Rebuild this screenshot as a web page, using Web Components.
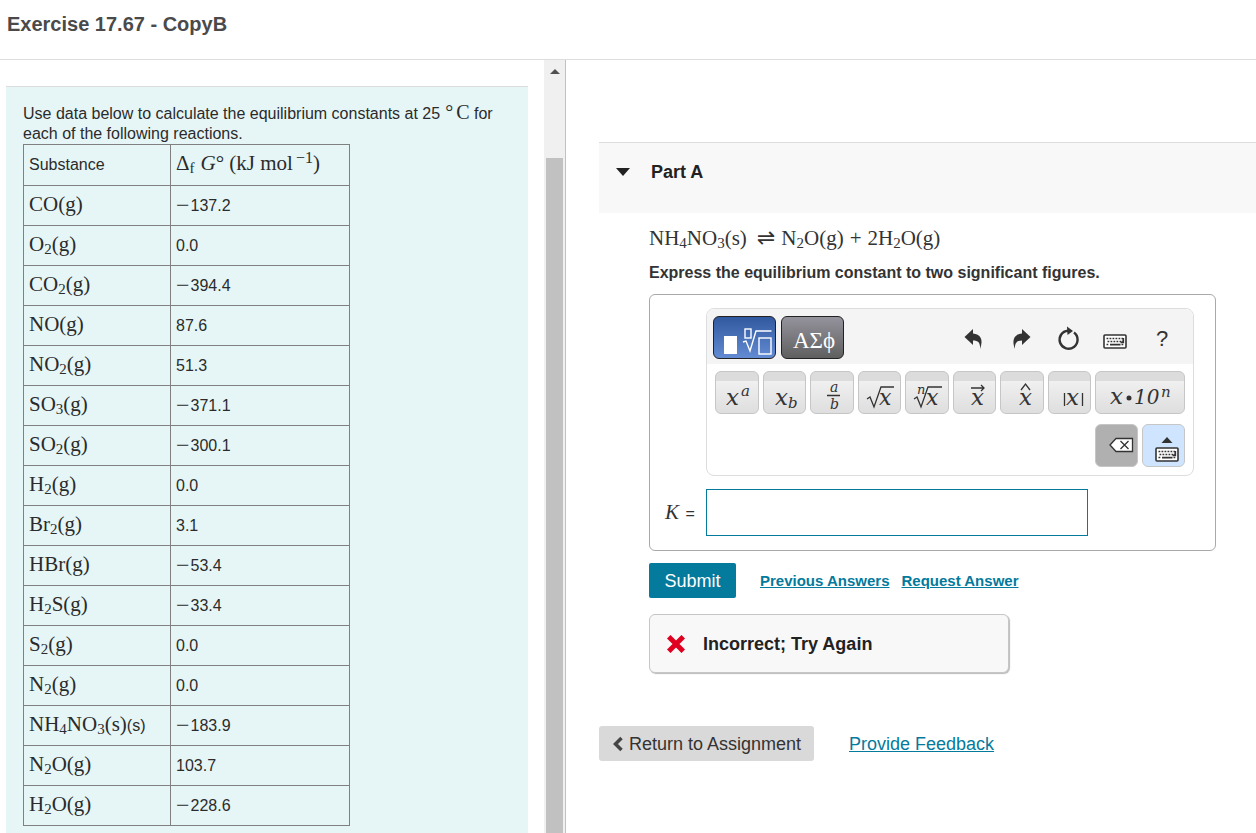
<!DOCTYPE html>
<html lang="en">
<head>
<meta charset="utf-8">
<meta name="viewport" content="width=device-width, initial-scale=1">
<title>Exercise 17.67 - CopyB</title>
<style>
  body { margin: 0; background: #fff; color: #2b2b2b; font: 16px/20px "Liberation Sans", Arial, sans-serif; }
</style>
</head>
<body>
<exercise-page>
  <span slot="title">Exercise 17.67 - CopyB</span>
  <problem-card slot="problem">
    <span slot="intro">Use data below to calculate the equilibrium constants at 25<math-text>°<i-gap></i-gap>C</math-text> for each of the following reactions.</span>
  </problem-card>
  <part-section slot="work">
    <span slot="title">Part A</span>
    <reaction-line slot="reaction"></reaction-line>
    <span slot="hint">Express the equilibrium constant to two significant figures.</span>
    <answer-box slot="answer"></answer-box>
    <submit-bar slot="answer"></submit-bar>
    <result-note slot="answer">Incorrect; Try Again</result-note>
  </part-section>
  <page-footer slot="footer"></page-footer>
</exercise-page>

<script>
const define = (name, html, setup) => {
  const template = document.createElement('template');
  template.innerHTML = html;
  customElements.define(name, class extends HTMLElement {
    constructor() {
      super();
      this.attachShadow({ mode: 'open' }).append(template.content.cloneNode(true));
      if (setup) setup(this.shadowRoot);
    }
  });
};

const keyboard = (x, y) => `
  <g transform="translate(${x} ${y})">
    <rect x="1" y="1" width="22" height="13" rx="1" fill="#fff" stroke="#333" stroke-width="1.6"/>
    <path d="M3.5 4.5H20M4.5 7.5H20M3.5 10.5H6M18.5 10.5H21" stroke="#333" stroke-width="1.7" stroke-dasharray="1.8 1.2" fill="none"/>
    <path d="M7 10.7H17.5M20.3 4V8.4H17.6" stroke="#333" stroke-width="1.7" fill="none"/>
  </g>`;

define('i-gap', `<style>:host{display:inline-block;width:3px}</style>`);

/* Serif run used for formulas */
define('math-text', `
<style>
  :host { font-family: "Liberation Serif", "Times New Roman", serif; font-size: var(--math-size, 21px); line-height: 1px; }
</style><slot></slot>`);

define('exercise-page', `
<style>
  :host { display: flex; flex-direction: column; height: 100vh; overflow: hidden; }
  header { flex: none; padding: 12px 7px 23px; border-bottom: 1px solid #ddd; }
  h1 { margin: 0; font-size: 20px; line-height: 24px; font-weight: bold; color: #4a4a4a; }
  main { flex: 1; min-height: 0; display: grid; grid-template-columns: 566fr 690fr; }
  .left { display: flex; min-width: 0; min-height: 0; overflow: hidden; border-right: 1px solid #b9c3cb; }
  .problem { flex: 1; min-width: 0; padding: 26px 16px 0 6px; display: grid; }
  .work { min-width: 0; padding: 82px 0 0 33px; }
</style>
<header><h1><slot name="title"></slot></h1></header>
<main>
  <div class="left">
    <div class="problem"><slot name="problem"></slot></div>
    <scroll-rail></scroll-rail>
  </div>
  <div class="work"><slot name="work"></slot><slot name="footer"></slot></div>
</main>`);

define('scroll-rail', `
<style>
  :host { flex: none; width: 21px; display: flex; flex-direction: column; align-items: center; background: #f0f0f0; }
  svg { display: block; margin: 9px 0 84px; }
  .thumb { flex: 1; width: 17px; background: #c1c1c1; }
</style>
<svg width="10" height="5" viewBox="0 0 10 5"><path d="M5 0L10 5H0z" fill="#505050"/></svg>
<div class="thumb"></div>`);

const rows = [
  ['CO(g)', '−137.2'], ['O2(g)', '0.0'], ['CO2(g)', '−394.4'], ['NO(g)', '87.6'],
  ['NO2(g)', '51.3'], ['SO3(g)', '−371.1'], ['SO2(g)', '−300.1'], ['H2(g)', '0.0'],
  ['Br2(g)', '3.1'], ['HBr(g)', '−53.4'], ['H2S(g)', '−33.4'], ['S2(g)', '0.0'],
  ['N2(g)', '0.0'], ['NH4NO3(s)', '−183.9', '(s)'], ['N2O(g)', '103.7'], ['H2O(g)', '−228.6']
];
const formula = t => t.replace(/\d/g, '<sub>$&</sub>');

define('problem-card', `
<style>
  :host { display: block; box-sizing: border-box; background: #e6f6f7; border-top: 1px solid #ddd; padding: 17px 17px 8px; }
  p { margin: 0; --math-size: 20px; }
  table { border-collapse: collapse; table-layout: fixed; width: 327px; }
  th, td { box-sizing: border-box; border: 1px solid #808080; height: 40px; padding: 0 5px; text-align: left; font-weight: normal; vertical-align: middle; }
  th { height: 41px; }
  .name { width: 147px; }
  .minus { --math-size: 24px; vertical-align: -2px; margin-right: 1px; }
  sub, sup { font-size: 15px; line-height: 1px; vertical-align: baseline; position: relative; }
  sub { top: 3px; }
  sup { font-size: 16px; top: -7px; }
</style>
<p><slot name="intro"></slot></p>
<table>
  <thead><tr><th class="name" scope="col">Substance</th>
  <th scope="col"><math-text>Δ<sub>f</sub><i-gap></i-gap><i-gap></i-gap><i>G</i>° (kJ mol<i-gap></i-gap><sup>−1</sup>)</math-text></th></tr></thead>
  <tbody></tbody>
</table>`, root => {
  root.querySelector('tbody').innerHTML = rows.map(([name, value, extra = '']) =>
    `<tr><td><math-text>${formula(name)}</math-text>${extra}</td>` +
    `<td>${value.replace('−', '<math-text class="minus">−</math-text>')}</td></tr>`).join('');
});

define('part-section', `
<style>
  :host { display: block; }
  header { display: flex; align-items: flex-start; gap: 21px; height: 70px; box-sizing: content-box; border-top: 1px solid #ddd; background: #f8f8f8; padding-left: 17px; }
  button { border: 0; background: none; padding: 0; margin: 24px 0 0; width: 14px; height: 9px; }
  svg { display: block; }
  h2 { margin: 19px 0 0; font-size: 18px; line-height: 20px; color: #222; }
  .body { padding: 14px 40px 0 50px; }
  .hint { margin: 14px 0 11px; font-size: 16px; line-height: 20px; font-weight: bold; color: #333; }
</style>
<header>
  <button aria-label="Collapse part"><svg width="14" height="9" viewBox="0 0 14 9"><path d="M0 1H14L7 9z" fill="#222"/></svg></button>
  <h2><slot name="title"></slot></h2>
</header>
<div class="body">
  <slot name="reaction"></slot>
  <p class="hint"><slot name="hint"></slot></p>
  <slot name="answer"></slot>
</div>`);

define('reaction-line', `
<style>
  :host { display: block; color: #333; font: 21px/22px "Liberation Serif", "Times New Roman", serif; white-space: nowrap; }
  sub { font-size: 15px; line-height: 1px; vertical-align: baseline; position: relative; top: 3px; }
  .arrow { font: 22px/1px "DejaVu Sans", sans-serif; margin: 0 6px 0 10px; }
  .plus { margin: 0 6px; }
</style>${formula('NH4NO3(s)')}<span class="arrow">⇌</span>${formula('N2O(g)')}<span class="plus">+</span>2${formula('H2O(g)')}`);

const key = (label, art) =>
  `<button class="key" aria-label="${label}"><svg width="42" height="42" viewBox="0 0 42 42">${art}</svg></button>`;

define('answer-box', `
<style>
  :host { display: grid; grid-template-columns: 41px minmax(0, 1fr); row-gap: 13px; align-items: center;
    border: 1px solid #a9a9a9; border-radius: 6px; padding: 13px 21px 14px 15px; }
  .panel { grid-column: 2; border: 1px solid #ddd; border-radius: 8px; overflow: hidden; background: #fff; }
  .top { display: flex; align-items: center; gap: 5px; background: #f4f4f4; padding: 7px 19px 5px 6px; }
  .tools { margin-left: auto; display: flex; gap: 23px; }
  button { padding: 0; font: inherit; }
  svg { display: block; overflow: visible; }
  .tab { box-sizing: border-box; width: 63px; height: 43px; border: 1px solid #222; border-radius: 6px; }
  .blue { background: linear-gradient(#30599f, #628bd3); }
  .gray { background: linear-gradient(#95939d, #5f5f5f); }
  .tool { width: 24px; height: 24px; border: 0; background: none; }
  .rows { padding: 7px 8px 8px; display: grid; grid-template-columns: minmax(0, 1fr); gap: 10px; max-width: 470px; }
  .row { display: flex; gap: 4px; }
  .row.end { justify-content: flex-end; }
  .key { flex: 1; min-width: 0; box-sizing: border-box; height: 43px; border: 1px solid #c6c6c6; border-radius: 6px;
    background: linear-gradient(#dcdcdc 0 9px, #f0f0f0 9px, #dedede); }
  .key.wide { flex: 0 0 90px; }
  .end .key { flex: 0 0 43px; background: #b0b0b0; }
  .end .key.on { background: #cfe5ff; }
  text { font-family: "DejaVu Serif", serif; font-style: italic; fill: #333; }
  text.up { font-family: "Liberation Serif", serif; font-style: normal; fill: #fff; }
  text.help { font-family: "Liberation Sans", sans-serif; font-style: normal; }
  .ln { fill: none; stroke: #333; stroke-width: 1.3; }
  label { color: #333; font-size: 16px; white-space: nowrap; }
  label i { font: italic 21px/20px "Liberation Serif", serif; margin-right: 2px; }
  input { box-sizing: border-box; width: 100%; max-width: 382px; height: 47px; border: 1px solid #047a9c; background: #fff; padding: 0 8px; font: inherit; outline: 0; }
</style>
<div class="panel">
  <div class="top">
    <button class="tab blue" aria-label="Templates"><svg width="61" height="41" viewBox="0 0 61 41">
      <rect x="10" y="19" width="13" height="18" fill="#fff"/>
      <g fill="none" stroke="#fff" stroke-width="1.4"><rect x="31" y="12" width="6" height="9"/>
      <path d="M29 25L32 24L36 34L42 14H57.500"/><rect x="45" y="21" width="12" height="16"/></g></svg></button>
    <button class="tab gray" aria-label="Symbols"><svg width="61" height="41" viewBox="0 0 61 41"><text class="up" x="11" y="31" font-size="23">ΑΣϕ</text></svg></button>
    <div class="tools">
      <button class="tool" aria-label="Undo"><svg width="24" height="24" viewBox="0 0 24 24"><path d="M11 3V7.500C18 8 22 13 18 23C18.500 16.500 16 14.500 11 14.500V19L2.500 11z" fill="#333"/></svg></button>
      <button class="tool" aria-label="Redo"><svg width="24" height="24" viewBox="0 0 24 24"><path d="M13 3V7.500C6 8 2 13 6 23C5.500 16.500 8 14.500 13 14.500V19L21.500 11z" fill="#333"/></svg></button>
      <button class="tool" aria-label="Reset"><svg width="24" height="24" viewBox="0 0 24 24"><path d="M18 6.500A9 9 0 1 1 12 4.700" fill="none" stroke="#333" stroke-width="2.400"/><path d="M11 0.500L17 5L11.500 9z" fill="#333"/></svg></button>
      <button class="tool" aria-label="Keyboard shortcuts"><svg width="24" height="24" viewBox="0 0 24 24">${keyboard(0, 8)}</svg></button>
      <button class="tool" aria-label="Help"><svg width="24" height="24" viewBox="0 0 24 24"><text class="help" x="6" y="20" font-size="22">?</text></svg></button>
    </div>
  </div>
  <div class="rows">
    <div class="row">
      ${key('Superscript', '<text x="10" y="33" font-size="23">x</text><text x="25" y="24" font-size="15">a</text>')}
      ${key('Subscript', '<text x="11" y="33" font-size="23">x</text><text x="24" y="36" font-size="15">b</text>')}
      ${key('Fraction', '<text x="19" y="20" font-size="14">a</text><path class="ln" d="M16 23.500H29"/><text x="19" y="37" font-size="14">b</text>')}
      ${key('Square root', '<path class="ln" d="M8 27L11 25L15 35L22 15H35"/><text x="20" y="33" font-size="22">x</text>')}
      ${key('Nth root', '<path class="ln" d="M8 27L11 25L15 35L22 15H36"/><text x="11" y="22" font-size="13">n</text><text x="20" y="33" font-size="22">x</text>')}
      ${key('Vector', '<path class="ln" d="M17 16H30M27 13L30 16L27 19"/><text x="17" y="33" font-size="23">x</text>')}
      ${key('Unit vector', '<path class="ln" d="M20 18L24.500 12L29 18"/><text x="18" y="33" font-size="23">x</text>')}
      ${key('Absolute value', '<path class="ln" d="M15.500 21V34M33.500 21V34"/><text x="17" y="33" font-size="23">x</text>')}
      <button class="key wide" aria-label="Scientific notation"><svg width="88" height="42" viewBox="0 0 88 42"><text x="14" y="32" font-size="23">x</text><circle cx="33" cy="26" r="2.500" fill="#333"/><text x="38" y="32" font-size="20">10</text><text x="65" y="25" font-size="15">n</text></svg></button>
    </div>
    <div class="row end">
      <button class="key" aria-label="Delete"><svg width="42" height="42" viewBox="0 0 42 42"><path d="M14 20L20 13.500H36.500V26.500H20z" fill="#fff" stroke="#333" stroke-width="1.300"/><path class="ln" d="M24.500 16L32.500 24M32.500 16L24.500 24"/></svg></button>
      <button class="key on" aria-label="Toggle keyboard"><svg width="42" height="42" viewBox="0 0 42 42"><path d="M24 12L29.500 18H18.500z" fill="#333"/>${keyboard(12, 22)}</svg></button>
    </div>
  </div>
</div>
<label for="answer"><i>K</i> =</label>
<input id="answer" type="text" autocomplete="off">`);

define('submit-bar', `
<style>
  :host { display: flex; align-items: center; margin: 12px 0 16px; }
  button { width: 87px; height: 35px; margin-right: 24px; padding: 0; border: 0; border-radius: 2px; background: #047a9c; color: #fff; font: 18px/20px "Liberation Sans", Arial, sans-serif; }
  a { margin-right: 12px; color: #047a9c; font-size: 15px; font-weight: bold; line-height: 20px; }
</style>
<button type="submit">Submit</button><a href="#previous">Previous Answers</a><a href="#request">Request Answer</a>`);

define('result-note', `
<style>
  :host { display: flex; align-items: center; gap: 18px; box-sizing: border-box; max-width: 360px; height: 59px; padding-left: 17px;
    border: 1px solid #c6c6c6; border-radius: 6px; background: #f8f8f8; box-shadow: 1px 1px 1px #bbb; color: #222; font-size: 18px; font-weight: bold; }
</style>
<svg width="18" height="18" viewBox="0 0 18 18"><path d="M3.500 3.500L14.500 14.500M14.500 3.500L3.500 14.500" stroke="#e00020" stroke-width="5" stroke-linecap="square"/></svg>
<span><slot></slot></span>`);

define('page-footer', `
<style>
  :host { display: flex; align-items: center; gap: 35px; margin-top: 53px; font-size: 18px; line-height: 20px; }
  button { display: flex; align-items: center; justify-content: center; gap: 5px; width: 215px; height: 35px; padding: 0; border: 0; border-radius: 3px; background: #d9d9d9; color: #333; font: inherit; }
  a { color: #047a9c; }
</style>
<button type="button"><svg width="12" height="16" viewBox="0 0 12 16"><path d="M9.500 2L3.500 8L9.500 14" fill="none" stroke="#444" stroke-width="3.500"/></svg>Return to Assignment</button>
<a href="#feedback">Provide Feedback</a>`);
</script>
</body>
</html>
